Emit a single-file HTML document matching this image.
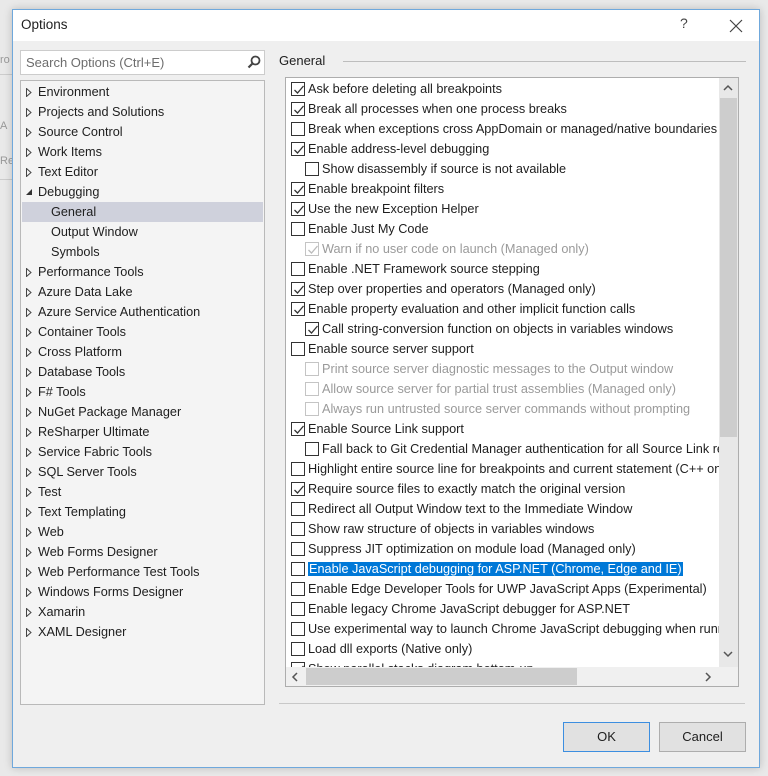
<!DOCTYPE html>
<html><head><meta charset="utf-8"><style>
*{margin:0;padding:0;box-sizing:border-box}
body{width:768px;height:776px;background:#e9e9e9;font-family:"Liberation Sans",sans-serif;font-size:12.7px;color:#1e1e1e;position:relative;overflow:hidden}
.a{position:absolute}
#dlg{left:12px;top:9px;width:748px;height:759px;background:#efefef;border:1px solid #6fa8dc;box-shadow:0 0 8px rgba(0,0,0,.2)}
#title{left:0;top:0;width:746px;height:31px;background:#fff}
.tr{position:absolute;left:0;height:20px;line-height:20px;white-space:nowrap}
.row{position:absolute;left:0;height:20px;line-height:20px;white-space:nowrap;width:440px}
.cb{position:absolute;top:3px;width:14px;height:14px;border:1px solid #333;background:#fff}
.cb.d{border-color:#c4c4c4}
.cb svg{position:absolute;left:1px;top:1px}
.dis{color:#9a9a9a}
.btn{position:absolute;height:30px;line-height:28px;text-align:center;background:#e1e1e1;border:1px solid #adadad;font-size:13px}
</style></head><body>
<div class="a" style="left:0;top:45px;width:12px;height:30px;border-bottom:1px solid #ccc;color:#999;font-size:11px;line-height:30px">ro</div>
<div class="a" style="left:0;top:120px;width:12px;height:20px;color:#999;font-size:11px">A</div>
<div class="a" style="left:0;top:155px;width:12px;height:25px;color:#999;font-size:11px;border-bottom:1px solid #ccc">Re</div>
<div id="dlg" class="a">
 <div id="title" class="a"></div>
 <div class="a" style="left:8px;top:7px;font-size:13.5px">Options</div>
 <div class="a" style="left:667px;top:5px;font-size:14px;color:#444">?</div>
 <svg class="a" style="left:716px;top:9px" width="14" height="14"><path d="M1 1L13 13M13 1L1 13" stroke="#444" stroke-width="1.2"/></svg>
 <div class="a" style="left:7px;top:40px;width:245px;height:25px;background:#fff;border:1px solid #ccc"></div>
 <div class="a" style="left:13px;top:45px;color:#6d6d6d;font-size:13px">Search Options (Ctrl+E)</div>
 <svg class="a" style="left:234px;top:45px" width="14" height="14"><circle cx="8.5" cy="5.5" r="4" fill="none" stroke="#444" stroke-width="1.8"/><path d="M5.5 8.5L1.5 12.5" stroke="#444" stroke-width="2.2"/></svg>
 <div class="a" style="left:7px;top:70px;width:245px;height:625px;background:#f4f4f4;border:1px solid #b9b9b9;overflow:hidden">
  <div class="a" style="left:0;top:0;width:243px">
   <div id="tree"></div>
  </div>
 </div>
 <div class="a" style="left:266px;top:43px;font-size:13px">General</div>
 <div class="a" style="left:330px;top:51px;width:403px;height:1px;background:#bdbdbd"></div>
 <div class="a" style="left:272px;top:67px;width:454px;height:610px;background:#fff;border:1px solid #adadad;overflow:hidden">
  <div class="a" style="left:0;top:1px;width:433px;height:588px;overflow:hidden" id="list"></div>
  <div class="a" style="left:433px;top:0;width:19px;height:589px;background:#e8e8e8"></div>
  <div class="a" style="left:434px;top:20px;width:17px;height:339px;background:#cdcdcd"></div>
  <svg class="a" style="left:437px;top:6px" width="10" height="8"><path d="M1 6L5 2L9 6" fill="none" stroke="#555" stroke-width="1.5"/></svg>
  <svg class="a" style="left:437px;top:572px" width="10" height="8"><path d="M1 2L5 6L9 2" fill="none" stroke="#555" stroke-width="1.5"/></svg>
  <div class="a" style="left:0;top:589px;width:433px;height:19px;background:#f0f0f0"></div>
  <div class="a" style="left:20px;top:590px;width:271px;height:17px;background:#cdcdcd"></div>
  <svg class="a" style="left:5px;top:594px" width="8" height="10"><path d="M6 1L2 5L6 9" fill="none" stroke="#555" stroke-width="1.5"/></svg>
  <svg class="a" style="left:418px;top:594px" width="8" height="10"><path d="M2 1L6 5L2 9" fill="none" stroke="#555" stroke-width="1.5"/></svg>
  <div class="a" style="left:433px;top:589px;width:19px;height:19px;background:#f0f0f0"></div>
 </div>
 <div class="a" style="left:266px;top:693px;width:466px;height:1px;background:#c8c8c8"></div>
 <div class="btn" style="left:550px;top:712px;width:87px;border-color:#3c8ee0">OK</div>
 <div class="btn" style="left:646px;top:712px;width:87px">Cancel</div>
</div>
<script>
var t=["Environment","Projects and Solutions","Source Control","Work Items","Text Editor","*Debugging","-General","-Output Window","-Symbols","Performance Tools","Azure Data Lake","Azure Service Authentication","Container Tools","Cross Platform","Database Tools","F# Tools","NuGet Package Manager","ReSharper Ultimate","Service Fabric Tools","SQL Server Tools","Test","Text Templating","Web","Web Forms Designer","Web Performance Test Tools","Windows Forms Designer","Xamarin","XAML Designer"];
var h="";t.forEach(function(s,i){var y=1+i*20;
if(s[0]=="-"){var sel=s=="-General";h+='<div class="tr" style="top:'+y+'px;width:243px;padding-left:30px;'+(sel?'background:#cfd1dc;left:1px;width:241px;padding-left:29px':'')+'">'+s.slice(1)+'</div>';}
else if(s[0]=="*"){h+='<div class="tr" style="top:'+y+'px;padding-left:17px"><svg style="position:absolute;left:5px;top:7px" width="7" height="7"><path d="M6 0L6 6L0 6Z" fill="#333"/></svg>'+s.slice(1)+'</div>';}
else h+='<div class="tr" style="top:'+y+'px;padding-left:17px"><svg style="position:absolute;left:5px;top:6px" width="6" height="9"><path d="M0.5 0.5L5 4.5L0.5 8.5Z" fill="none" stroke="#444"/></svg>'+s+'</div>';});
document.getElementById("tree").innerHTML=h;
var L=[[1,0,0,"Ask before deleting all breakpoints"],[1,0,0,"Break all processes when one process breaks"],[0,0,0,"Break when exceptions cross AppDomain or managed/native boundaries"],[1,0,0,"Enable address-level debugging"],[0,1,0,"Show disassembly if source is not available"],[1,0,0,"Enable breakpoint filters"],[1,0,0,"Use the new Exception Helper"],[0,0,0,"Enable Just My Code"],[1,1,1,"Warn if no user code on launch (Managed only)"],[0,0,0,"Enable .NET Framework source stepping"],[1,0,0,"Step over properties and operators (Managed only)"],[1,0,0,"Enable property evaluation and other implicit function calls"],[1,1,0,"Call string-conversion function on objects in variables windows"],[0,0,0,"Enable source server support"],[0,1,1,"Print source server diagnostic messages to the Output window"],[0,1,1,"Allow source server for partial trust assemblies (Managed only)"],[0,1,1,"Always run untrusted source server commands without prompting"],[1,0,0,"Enable Source Link support"],[0,1,0,"Fall back to Git Credential Manager authentication for all Source Link requests"],[0,0,0,"Highlight entire source line for breakpoints and current statement (C++ only)"],[1,0,0,"Require source files to exactly match the original version"],[0,0,0,"Redirect all Output Window text to the Immediate Window"],[0,0,0,"Show raw structure of objects in variables windows"],[0,0,0,"Suppress JIT optimization on module load (Managed only)"],[0,0,0,"Enable JavaScript debugging for ASP.NET (Chrome, Edge and IE)",1],[0,0,0,"Enable Edge Developer Tools for UWP JavaScript Apps (Experimental)"],[0,0,0,"Enable legacy Chrome JavaScript debugger for ASP.NET"],[0,0,0,"Use experimental way to launch Chrome JavaScript debugging when running"],[0,0,0,"Load dll exports (Native only)"],[1,0,0,"Show parallel stacks diagram bottom-up"]];
h="";L.forEach(function(r,i){var y=i*20,x=r[1]?19:5;
var ck=r[0]?'<svg width="12" height="12"><path d="M1.5 6L4.5 9L10.5 2" fill="none" stroke="'+(r[2]?'#bbb':'#333')+'" stroke-width="1.3"/></svg>':'';
var txt=r[4]?'<span style="background:#0078d7;color:#fff;padding:0 1px">'+r[3]+'</span>':r[3];
h+='<div class="row'+(r[2]?' dis':'')+'" style="top:'+y+'px"><div class="cb'+(r[2]?' d':'')+'" style="left:'+x+'px">'+ck+'</div><div style="position:absolute;left:'+(x+17)+'px;top:0">'+txt+'</div></div>';});
document.getElementById("list").innerHTML=h;
</script>
</body></html>
